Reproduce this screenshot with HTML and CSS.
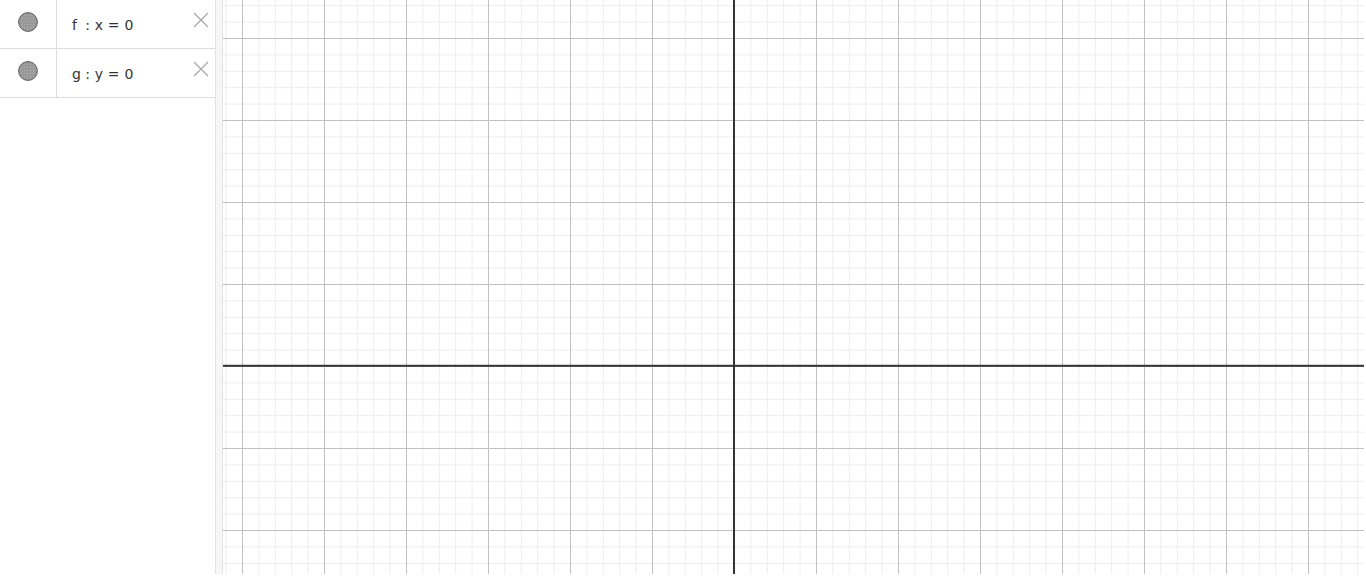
FILE: index.html
```html
<!DOCTYPE html>
<html lang="en">
<head>
<meta charset="utf-8">
<title>GeoGebra</title>
<link rel="stylesheet" href="styles.css">
</head>
<body>
<div class="app">
  <aside class="algebra">
    <div class="row">
      <div class="marble-col">
        <svg class="marble" width="20" height="20" viewBox="0 0 20 20">
          <defs>
            <pattern id="dots" width="3" height="3" patternUnits="userSpaceOnUse">
              <rect x="0" y="0" width="1" height="1" fill="#b0b0b0"/>
            </pattern>
          </defs>
          <circle cx="10" cy="10" r="9.4" fill="#999"/>
          <circle cx="10" cy="10" r="9.4" fill="url(#dots)" stroke="#5c5c5c" stroke-width="1"/>
        </svg>
      </div>
      <div class="content">
        <span class="g g-name">f</span><span class="g g-colon">:</span><span class="g g-var">x</span><span class="g g-eq">=</span><span class="g g-num">0</span>
      </div>
      <div class="close">
        <svg width="16" height="16" viewBox="0 0 16 16"><path d="M1 1 L15 15 M15 1 L1 15" stroke="#aaa" stroke-width="1.4" fill="none"/></svg>
      </div>
    </div>
    <div class="row">
      <div class="marble-col">
        <svg class="marble" width="20" height="20" viewBox="0 0 20 20">
          <circle cx="10" cy="10" r="9.4" fill="#999"/>
          <circle cx="10" cy="10" r="9.4" fill="url(#dots)" stroke="#5c5c5c" stroke-width="1"/>
        </svg>
      </div>
      <div class="content">
        <span class="g g-name g-left">g</span><span class="g g-colon">:</span><span class="g g-var">y</span><span class="g g-eq">=</span><span class="g g-num">0</span>
      </div>
      <div class="close">
        <svg width="16" height="16" viewBox="0 0 16 16"><path d="M1 1 L15 15 M15 1 L1 15" stroke="#aaa" stroke-width="1.4" fill="none"/></svg>
      </div>
    </div>
  </aside>
  <div class="divider"></div>
  <main class="graphics">
    <svg width="1141" height="574" viewBox="0 0 1141 574">
      <defs>
        <pattern id="grid" x="19" y="38" width="82" height="82" patternUnits="userSpaceOnUse">
          <rect x="16.4" y="0" width="1" height="82" fill="#ededed"/>
          <rect x="32.8" y="0" width="1" height="82" fill="#ededed"/>
          <rect x="49.2" y="0" width="1" height="82" fill="#ededed"/>
          <rect x="65.6" y="0" width="1" height="82" fill="#ededed"/>
          <rect x="0" y="16.4" width="82" height="1" fill="#ededed"/>
          <rect x="0" y="32.8" width="82" height="1" fill="#ededed"/>
          <rect x="0" y="49.2" width="82" height="1" fill="#ededed"/>
          <rect x="0" y="65.6" width="82" height="1" fill="#ededed"/>
          <rect x="0" y="0" width="1" height="82" fill="#c0c0c0"/>
          <rect x="0" y="0" width="82" height="1" fill="#c0c0c0"/>
        </pattern>
      </defs>
      <rect x="0" y="0" width="1141" height="574" fill="#fff"/>
      <rect x="0" y="0" width="1141" height="574" fill="url(#grid)"/>
      <rect x="0" y="364.8" width="1141" height="2" fill="#333"/>
      <rect x="510" y="0" width="2" height="574" fill="#333"/>
    </svg>
  </main>
</div>
</body>
</html>
```
FILE: styles.css
```css
html, body {
  margin: 0;
  padding: 0;
  background: #fff;
}

body {
  width: 1366px;
  height: 576px;
  overflow: hidden;
  font-family: "DejaVu Sans", "Noto Sans", sans-serif;
  color: #333;
}

.app {
  display: flex;
  height: 574px;
}

.algebra {
  width: 215px;
  flex: none;
  display: flex;
  flex-direction: column;
  background: #fff;
}

.row {
  display: flex;
  height: 48px;
  border-bottom: 1px solid #dcdcdc;
}

.marble-col {
  width: 57px;
  flex: none;
  border-right: 1px solid #dcdcdc;
  padding: 12px 0 0 18px;
  box-sizing: border-box;
}

.marble {
  display: block;
}

.content {
  flex: 1;
  display: flex;
  padding: 15px 0 0 11px;
  font-size: 14px;
  line-height: 20px;
  height: 20px;
  color: #333;
  white-space: nowrap;
}

.g {
  flex: none;
  display: block;
  text-align: center;
}

.g-name {
  width: 13px;
}

.g-left {
  text-align: right;
}

.g-colon {
  width: 13px;
}

.g-var {
  width: 10px;
}

.g-eq {
  width: 19px;
}

.g-num {
  width: 12px;
}

.close {
  width: 22px;
  flex: none;
  padding-top: 12px;
  box-sizing: border-box;
}

.close svg {
  display: block;
}

.divider {
  width: 8px;
  flex: none;
  box-sizing: border-box;
  border-left: 1px solid #e2e2e2;
  border-right: 1px solid #e2e2e2;
  background: #f6f6f6;
}

.graphics {
  width: 1141px;
  flex: none;
  height: 574px;
}

.graphics svg {
  display: block;
}
```
